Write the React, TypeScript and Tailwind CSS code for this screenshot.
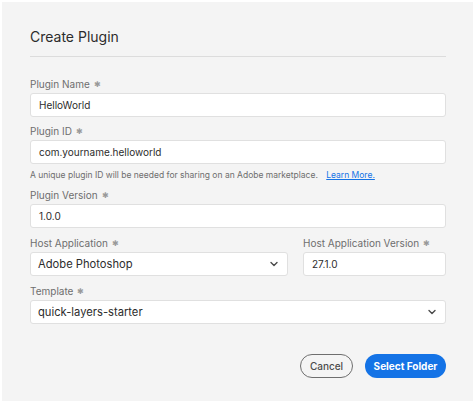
import React from "react";

const Star = () => <span className="ml-[4px] text-[#9a9a9a] text-[8px] align-[1px]">✱</span>;

function Label({ children }: { children: React.ReactNode }) {
  return (
    <div className="h-[14px] leading-[14px] text-[10px] text-[#6e6e6e]">
      {children}
      <Star />
    </div>
  );
}

function Input({ value, w }: { value: string; w?: string }) {
  return (
    <div className={`mt-[2px] h-[24px] ${w ?? "w-full"} bg-white border border-[#e0e0e0] rounded-[3px] px-[8px] flex items-center text-[10px] text-[#2c2c2c]`}>
      {value}
    </div>
  );
}

function Chevron() {
  return (
    <svg width="10" height="10" viewBox="0 0 10 10" className="text-[#4b4b4b]">
      <path d="M2 3.5 L5 6.5 L8 3.5" fill="none" stroke="currentColor" strokeWidth="1.4" strokeLinecap="round" strokeLinejoin="round" />
    </svg>
  );
}

function Select({ value }: { value: string }) {
  return (
    <div className="mt-[2px] h-[24px] w-full bg-white border border-[#e0e0e0] rounded-[3px] pl-[7px] pr-[8px] flex items-center justify-between text-[11.2px] text-[#2c2c2c]">
      <span>{value}</span>
      <Chevron />
    </div>
  );
}

export default function App() {
  return (
    <div className="w-[474px] h-[405px] bg-white pt-[2px] pl-[2px] pr-[1px] pb-[4px]" style={{ fontFamily: "Inter, 'Noto Sans', sans-serif" }}>
      <div className="h-full bg-[#f4f4f4] pl-[28px] pr-[27px] pt-[24px] flex flex-col">
        <div className="h-[22px] leading-[22px] text-[14px] text-[#2c2c2c]">Create Plugin</div>
        <div className="mt-[8px] h-px bg-[#dcdcdc]" />
        <div className="mt-[20px]">
          <Label>Plugin Name</Label>
          <Input value="HelloWorld" />
        </div>
        <div className="mt-[7px]">
          <Label>Plugin ID</Label>
          <Input value="com.yourname.helloworld" />
        </div>
        <div className="mt-[5px] h-[12px] leading-[12px] text-[8.5px] text-[#6e6e6e]">
          A unique plugin ID will be needed for sharing on an Adobe marketplace.{" "}
          <span className="ml-[6px] text-[#1473e6] underline">Learn More.</span>
        </div>
        <div className="mt-[7px]">
          <Label>Plugin Version</Label>
          <Input value="1.0.0" />
        </div>
        <div className="mt-[8px] flex gap-[15px]">
          <div className="w-[258px]">
            <Label>Host Application</Label>
            <Select value="Adobe Photoshop" />
          </div>
          <div className="flex-1">
            <Label>Host Application Version</Label>
            <Input value="27.1.0" />
          </div>
        </div>
        <div className="mt-[8px]">
          <Label>Template</Label>
          <Select value="quick-layers-starter" />
        </div>
        <div className="mt-[30px] flex justify-end gap-[12px]">
          <div className="h-[24px] w-[53px] rounded-full border-[1.5px] border-[#6e6e6e] flex items-center justify-center text-[10px] text-[#4b4b4b] font-medium">
            Cancel
          </div>
          <div className="h-[24px] w-[81px] rounded-full bg-[#1473e6] flex items-center justify-center text-[10px] text-white font-bold">
            Select Folder
          </div>
        </div>
      </div>
    </div>
  );
}
